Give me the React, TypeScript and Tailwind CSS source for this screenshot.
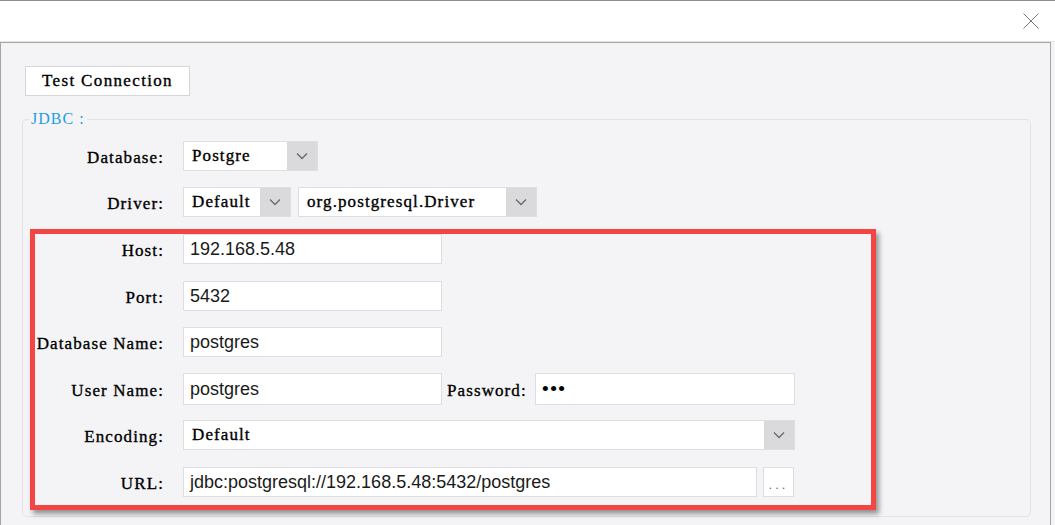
import type { ReactNode } from "react";

const label = "font-['Liberation_Serif',serif] text-[17px] tracking-[1.1px] text-black [-webkit-text-stroke:0.35px_#000]";
const value = "font-['Liberation_Sans',Arial,sans-serif] text-[18px] text-[#1a1a1a]";

function Chevron() {
  return (
    <svg width="12" height="8" viewBox="0 0 12 8" className="text-[#6a6a6a]">
      <path d="M1 1.5 L6 6.5 L11 1.5" fill="none" stroke="currentColor" strokeWidth="1.3" />
    </svg>
  );
}

function Select({ text, className }: { text: string; className: string }) {
  return (
    <div className={`flex h-[30px] border border-[#dedee0] bg-white ${className}`}>
      <div className={`flex flex-1 items-center overflow-hidden whitespace-nowrap pl-[8px] ${label}`}>{text}</div>
      <div className="flex w-[30px] items-center justify-center bg-[#dadadd]">
        <Chevron />
      </div>
    </div>
  );
}

function Input({ text, className }: { text: ReactNode; className: string }) {
  return (
    <div className={`flex items-center border border-[#dedee0] bg-white pl-[6px] ${value} ${className}`}>
      {text}
    </div>
  );
}

function Row({ name, className = "", children }: { name: string; className?: string; children: ReactNode }) {
  return (
    <div className={`flex items-center ${className}`}>
      <div className={`mr-[19px] w-[141px] pt-[3px] text-right ${label}`}>{name}:</div>
      {children}
    </div>
  );
}

export default function App() {
  return (
    <div className="relative h-[525px] w-[1055px] overflow-hidden border-t border-[#8f8f8f] bg-[#f4f4f6]">
      <div className="flex h-[41px] items-center justify-end border-b border-[#e6e6e8] bg-white pr-[16px]">
        <svg width="16" height="16" viewBox="0 0 16 16" className="text-[#7a7a7a]">
          <path d="M0.5 0.5 L15.5 15.5 M15.5 0.5 L0.5 15.5" stroke="currentColor" strokeWidth="1" />
        </svg>
      </div>

      <div className="h-[500px] w-[1051px] border border-[#a4a4a4] bg-[#f4f4f6] pt-[23px]">
        <button
          type="button"
          className={`ml-[24px] h-[30px] w-[165px] border border-[#d6d6d8] bg-white tracking-[1.35px] ${label}`}
        >
          Test Connection
        </button>

        <fieldset className="mt-[15px] ml-[21px] h-[406px] w-[1009px] rounded-[5px] border border-[#e3e3e6] pt-[14px]">
          <legend className="ml-[6px] px-[2px] font-['Liberation_Serif',serif] text-[16px] leading-[16px] tracking-[1px] text-[#1e9ee2]">
            JDBC :
          </legend>

          <Row name="Database">
            <Select text="Postgre" className="w-[135px]" />
          </Row>
          <Row name="Driver" className="mt-[16px]">
            <Select text="Default" className="w-[108px]" />
            <Select text="org.postgresql.Driver" className="ml-[7px] w-[239px]" />
          </Row>
          <Row name="Host" className="mt-[17px]">
            <Input text="192.168.5.48" className="h-[30px] w-[259px]" />
          </Row>
          <Row name="Port" className="mt-[17px]">
            <Input text="5432" className="h-[30px] w-[259px]" />
          </Row>
          <Row name="Database Name" className="mt-[16px]">
            <Input text="postgres" className="h-[30px] w-[259px]" />
          </Row>
          <Row name="User Name" className="mt-[16px]">
            <Input text="postgres" className="h-[32px] w-[259px]" />
            <div className={`ml-[5px] mr-[8px] w-[80px] pt-[3px] ${label}`}>Password:</div>
            <Input
              text={<span className="text-[19px] tracking-[1.5px] text-black">•••</span>}
              className="h-[32px] w-[260px]"
            />
          </Row>
          <Row name="Encoding" className="mt-[15px]">
            <Select text="Default" className="w-[612px]" />
          </Row>
          <Row name="URL" className="mt-[17px]">
            <Input text="jdbc:postgresql://192.168.5.48:5432/postgres" className="h-[30px] w-[574px]" />
            <div className="ml-[6px] flex h-[30px] w-[31px] items-end justify-center border border-[#dedee0] bg-white pb-[6px] font-['Liberation_Sans',sans-serif] text-[13px] leading-[11px] tracking-[3px] text-[#7a5a92]">
              ...
            </div>
          </Row>
        </fieldset>
      </div>

      <div className="pointer-events-none absolute left-[30px] top-[228px] h-[281px] w-[846px] border-[5px] border-[#f44545] shadow-[3px_4px_5px_rgba(0,0,0,0.4)]" />
    </div>
  );
}
